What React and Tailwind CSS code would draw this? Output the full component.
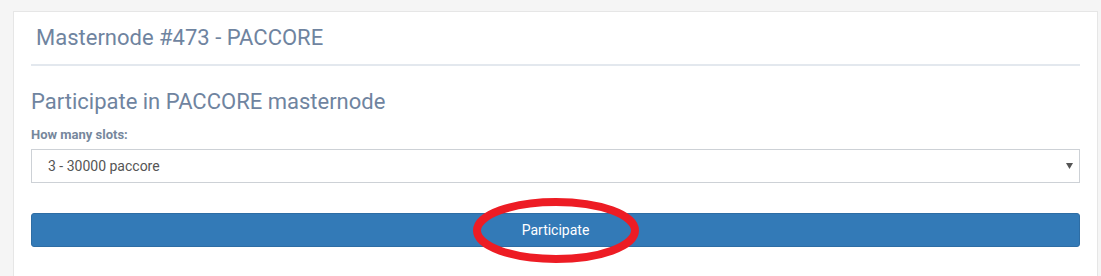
import React from 'react';

const Arrow = () => (
  <svg className="pointer-events-none absolute right-[7px] top-[14px]" width="7" height="6" viewBox="0 0 7 6">
    <path d="M0 0 H7 L3.5 6 Z" fill="#555" />
  </svg>
);

const Highlight = () => (
  <svg
    className="pointer-events-none absolute left-[441px] top-[-16px]"
    width="168"
    height="67"
    viewBox="0 0 168 67"
  >
    <ellipse cx="84" cy="33.5" rx="79" ry="28.5" fill="none" stroke="#ed1c24" strokeWidth="8" />
  </svg>
);

export default function App() {
  return (
    <div className="min-h-[276px] bg-[#f5f5f5] pl-[13px] pr-[3px] pt-[11px] font-['Roboto',sans-serif]">
      <div className="min-h-[265px] border border-b-0 border-[#e6e6e6] bg-white px-[17px] pt-[14px]">
        <h2 className="pl-[5px] text-[22px] leading-[24px] font-normal text-[#6f84a0]">
          Masternode #473 - PACCORE
        </h2>
        <hr className="mt-[14px] border-t-2 border-[#e3e8ee]" />

        <h3 className="mt-[24px] text-[22px] leading-[24px] font-normal text-[#6f84a0]">
          Participate in PACCORE masternode
        </h3>

        <label className="mt-[12px] block text-[13px] leading-[17px] font-bold text-[#76879c]">
          How many slots:
        </label>
        <div className="relative mt-[6px]">
          <select
            defaultValue="3"
            className="block h-[34px] w-full appearance-none rounded-none border border-[#cdd1d6] bg-white pl-[16px] text-[14px] text-[#555] outline-none"
          >
            <option value="1">1 - 10000 paccore</option>
            <option value="2">2 - 20000 paccore</option>
            <option value="3">3 - 30000 paccore</option>
          </select>
          <Arrow />
        </div>

        <div className="relative mt-[30px]">
          <button className="block h-[34px] w-full rounded-[3px] border border-[#2e6da4] bg-[#337ab7] text-[14px] text-white">
            Participate
          </button>
          <Highlight />
        </div>
      </div>
    </div>
  );
}
